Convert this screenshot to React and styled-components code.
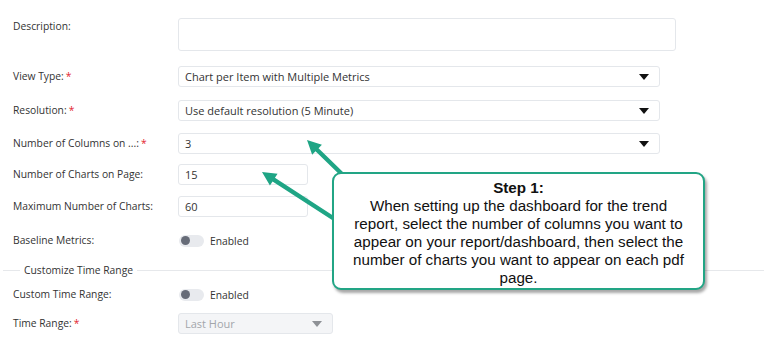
import React from "react";
import styled, { createGlobalStyle } from "styled-components";

const GlobalStyle = createGlobalStyle`
  html, body { margin: 0; padding: 0; background: #fff; }
  body { font-family: "Open Sans", "DejaVu Sans", sans-serif; color: #333; }
`;

const Page = styled.div`
  position: relative;
  width: 764px;
  height: 349px;
  overflow: hidden;
  padding-top: 18px;
  box-sizing: border-box;
`;

const Row = styled.div`
  display: flex;
  align-items: ${(p) => (p.$top ? "flex-start" : "center")};
  padding-left: 13px;
  margin-top: ${(p) => p.$mt || 0}px;
  min-height: 21px;
`;

const Label = styled.div`
  width: 165px;
  flex: none;
  font-size: 10.3px;
  line-height: 15px;
  color: #333;
  padding-top: ${(p) => (p.$top ? 1 : 0)}px;
`;

const Req = styled.span`
  color: #e3262f;
  margin-left: 2px;
`;

const Field = styled.div`
  box-sizing: border-box;
  width: ${(p) => p.$w}px;
  height: ${(p) => p.$h || 21}px;
  border: 1px solid #e4e7eb;
  border-radius: 3px;
  background: ${(p) => (p.$disabled ? "#f4f5f7" : "#fff")};
  color: ${(p) => (p.$disabled ? "#a3a6ab" : "#333")};
  font-size: 11px;
  display: flex;
  align-items: center;
  justify-content: space-between;
  padding: 0 6px 0 6px;
`;

const Caret = styled.span`
  width: 0;
  height: 0;
  margin-right: 4px;
  border-left: 5px solid transparent;
  border-right: 5px solid transparent;
  border-top: 6px solid ${(p) => (p.$disabled ? "#8e9196" : "#111")};
`;

const Toggle = styled.div`
  display: flex;
  align-items: center;
  gap: 6px;
  margin-left: 1px;
  font-size: 10.3px;
  color: #333;
`;

const Track = styled.span`
  position: relative;
  width: 25px;
  height: 12px;
  border-radius: 6px;
  background: #e8eaee;
  &::after {
    content: "";
    position: absolute;
    left: 2px;
    top: 1.5px;
    width: 9px;
    height: 9px;
    border-radius: 50%;
    background: #676c78;
  }
`;

const Divider = styled.div`
  display: flex;
  align-items: center;
  margin: 12px 0 0 3px;
  font-size: 10.3px;
  color: #333;
  &::before {
    content: "";
    width: 17px;
    border-top: 1px solid #e6e8eb;
    margin-right: 4px;
  }
  &::after {
    content: "";
    flex: 1;
    border-top: 1px solid #e6e8eb;
    margin-left: 4px;
  }
`;

const Callout = styled.div`
  position: absolute;
  left: 332px;
  top: 172px;
  width: 373px;
  height: 118px;
  box-sizing: border-box;
  border: 2px solid #22a585;
  border-radius: 9px;
  background: #fff;
  box-shadow: 2px 3px 3px rgba(0, 0, 0, 0.35);
  font-family: "Liberation Sans", Arial, sans-serif;
  font-size: 15.2px;
  line-height: 18px;
  color: #111;
  text-align: center;
  padding-top: 5px;
  z-index: 2;
  b {
    font-weight: bold;
  }
`;

const Arrows = styled.svg`
  position: absolute;
  left: 0;
  top: 0;
  z-index: 1;
  pointer-events: none;
`;

function arrowPoints(x1, y1, x2, y2, shaft = 2.2, headW = 7, headL = 14) {
  const dx = x2 - x1;
  const dy = y2 - y1;
  const len = Math.hypot(dx, dy);
  const ux = dx / len;
  const uy = dy / len;
  const nx = -uy;
  const ny = ux;
  const bx = x2 - ux * headL;
  const by = y2 - uy * headL;
  const pts = [
    [x1 + nx * shaft, y1 + ny * shaft],
    [bx + nx * shaft, by + ny * shaft],
    [bx + nx * headW, by + ny * headW],
    [x2, y2],
    [bx - nx * headW, by - ny * headW],
    [bx - nx * shaft, by - ny * shaft],
    [x1 - nx * shaft, y1 - ny * shaft],
  ];
  return pts.map((p) => p.join(",")).join(" ");
}

function Select({ w, value, disabled }) {
  return (
    <Field $w={w} $disabled={disabled}>
      <span>{value}</span>
      <Caret $disabled={disabled} />
    </Field>
  );
}

export default function App() {
  return (
    <Page>
      <GlobalStyle />
      <Row $top>
        <Label $top>Description:</Label>
        <Field $w={498} $h={33} />
      </Row>
      <Row $mt={15}>
        <Label>
          View Type:<Req>*</Req>
        </Label>
        <Select w={482} value="Chart per Item with Multiple Metrics" />
      </Row>
      <Row $mt={13}>
        <Label>
          Resolution:<Req>*</Req>
        </Label>
        <Select w={482} value="Use default resolution (5 Minute)" />
      </Row>
      <Row $mt={12}>
        <Label>
          Number of Columns on ...:<Req>*</Req>
        </Label>
        <Select w={482} value="3" />
      </Row>
      <Row $mt={10}>
        <Label>Number of Charts on Page:</Label>
        <Field $w={130}>15</Field>
      </Row>
      <Row $mt={11}>
        <Label>Maximum Number of Charts:</Label>
        <Field $w={130}>60</Field>
      </Row>
      <Row $mt={13}>
        <Label>Baseline Metrics:</Label>
        <Toggle>
          <Track />
          Enabled
        </Toggle>
      </Row>
      <Divider>Customize Time Range</Divider>
      <Row $mt={7}>
        <Label>Custom Time Range:</Label>
        <Toggle>
          <Track />
          Enabled
        </Toggle>
      </Row>
      <Row $mt={8}>
        <Label>
          Time Range:<Req>*</Req>
        </Label>
        <Select w={155} value="Last Hour" disabled />
      </Row>

      <Arrows width="764" height="349">
        <polygon points={arrowPoints(344, 176, 307, 140)} fill="#1fa585" />
        <polygon points={arrowPoints(336, 220, 262, 172)} fill="#1fa585" />
      </Arrows>
      <Callout>
        <b>Step 1:</b>
        <br />
        When setting up the dashboard for the trend
        <br />
        report, select the number of columns you want to
        <br />
        appear on your report/dashboard, then select the
        <br />
        number of charts you want to appear on each pdf
        <br />
        page.
      </Callout>
    </Page>
  );
}
